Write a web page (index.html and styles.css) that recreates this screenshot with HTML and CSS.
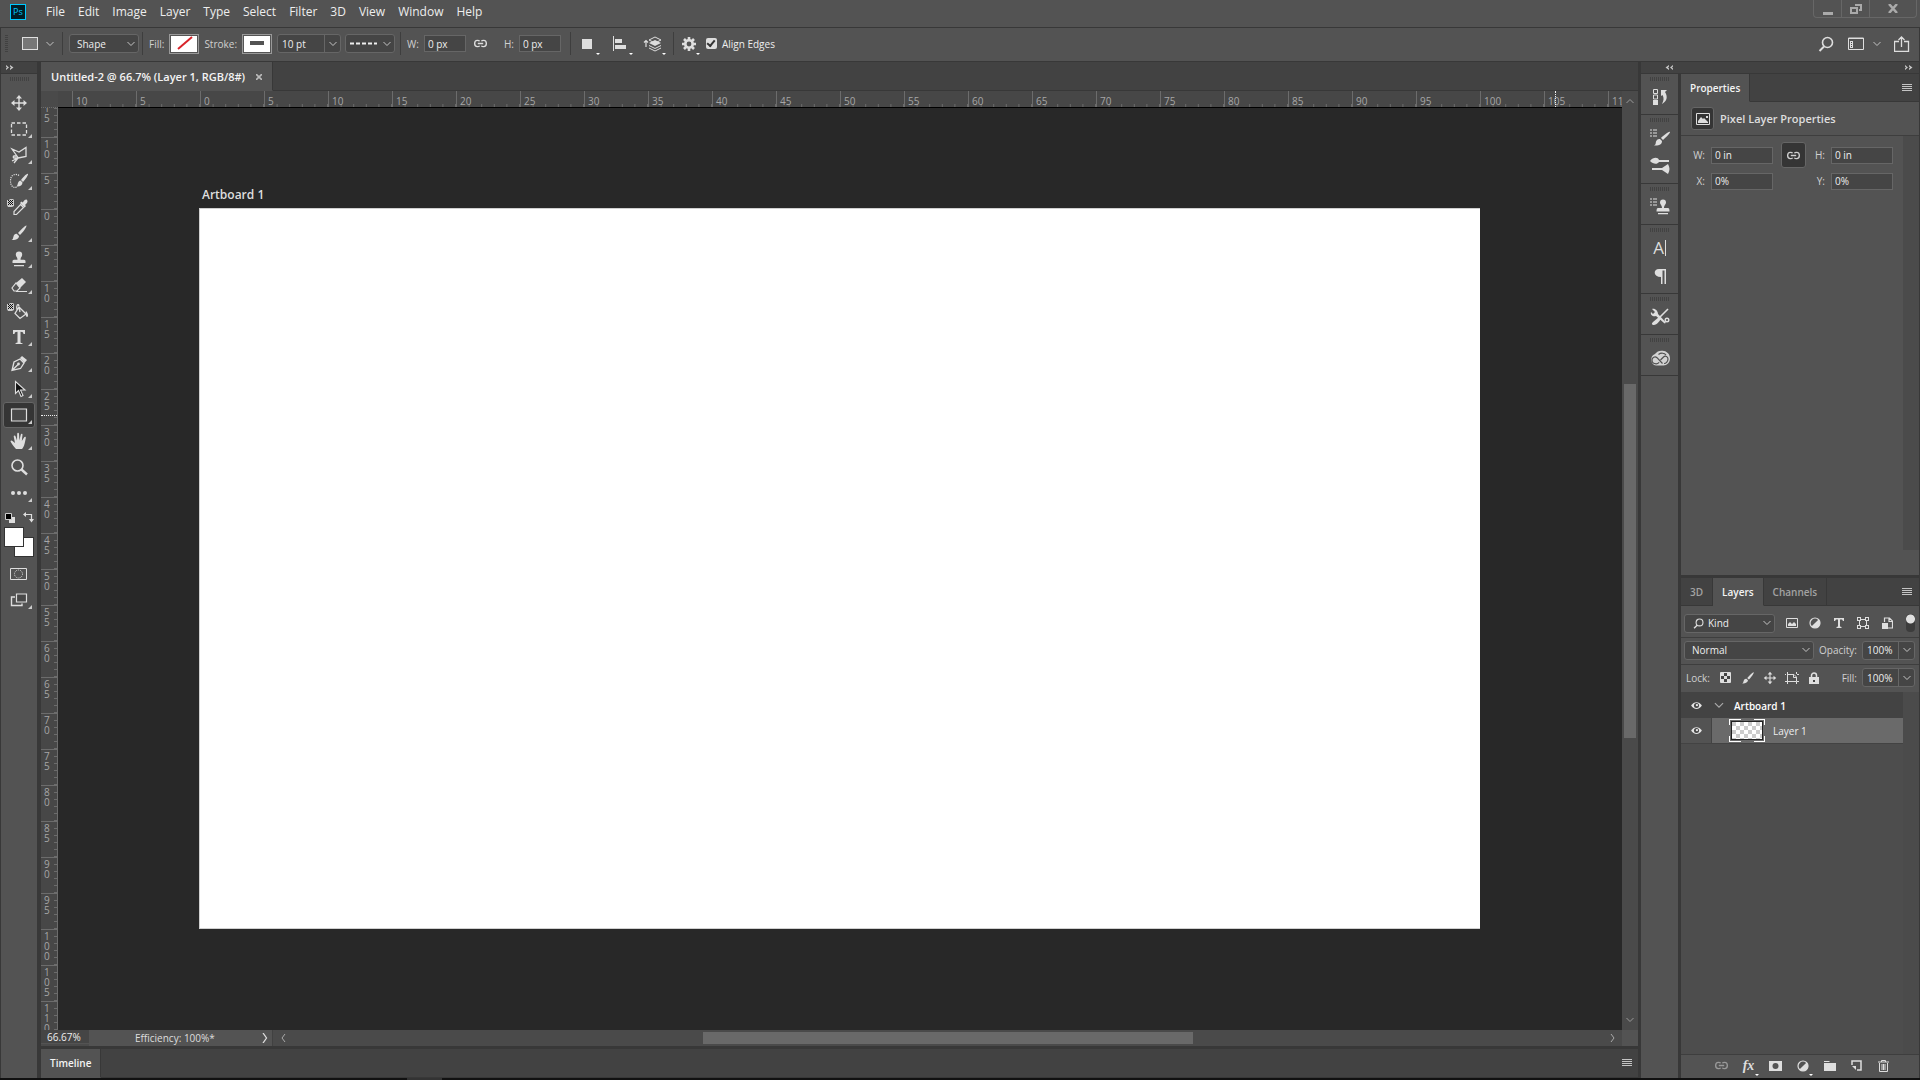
FILE: index.html
```html
<!DOCTYPE html>
<html lang="en">
<head>
<meta charset="utf-8">
<title>Untitled-2 - Photoshop</title>
<link rel="stylesheet" href="styles.css">
</head>
<body>
<svg class="defs" aria-hidden="true">
  <symbol id="chev" viewBox="0 0 8 6"><path d="M.5 1L4 4.500 7.500 1" fill="none" stroke="currentColor"/></symbol>
  <symbol id="dbl" viewBox="0 0 8 5"><path d="M0 0l3 2.500L0 5V3.500l1-1-1-1zM4 0l3.500 2.500L4 5V3.500l1-1-1-1z" fill="currentColor"/></symbol>
  <symbol id="link" viewBox="0 0 16 10"><path d="M7 2.500C6.500 1.500 5.500 1.500 4.500 1.500 2.500 1.500 1.500 3 1.500 5s1 3.500 3 3.500c1 0 2 0 2.500-1M9 2.500c.5-1 1.500-1 2.500-1 2 0 3 1.500 3 3.500s-1 3.500-3 3.500c-1 0-2 0-2.500-1M5 5h6" fill="none" stroke="currentColor" stroke-width="1.500"/></symbol>
  <symbol id="menu" viewBox="0 0 10 8"><path d="M0 .5h10M0 2.500h10M0 4.500h10M0 6.500h10" stroke="currentColor"/></symbol>
  <symbol id="brush" viewBox="0 0 18 18"><path d="M16.500 1.500c.5 1-4 7.500-6.500 9.500L8 9C10.500 6 15.500 1 16.500 1.500zM7 10l2 2c0 3-4 4.500-7.500 4 1.500-.5 1.500-2 2-3.500.5-2 2-3 3.500-2.500z" fill="currentColor"/></symbol>
  <symbol id="stamp" viewBox="0 0 18 18"><path d="M9 1.500a3.200 3.200 0 0 1 3.200 3.200c0 1.800-1.700 2.300-1.700 5h3.500c1 0 1.500.8 1.500 1.500V13h-13v-1.800c0-.7.5-1.500 1.500-1.500h3.500c0-2.700-1.700-3.200-1.700-5A3.200 3.200 0 0 1 9 1.500zM4 15h10v1.200H4z" fill="currentColor"/></symbol>
  <symbol id="move" viewBox="0 0 18 18"><path d="M9 1l3 3.500h-2.300v3.800h3.800V6L17 9l-3.500 3V9.700H9.700v3.800H12L9 17l-3-3.500h2.300V9.700H4.500V12L1 9l3.500-3v2.300h3.800V4.500H6z" fill="currentColor"/></symbol>
  <symbol id="half" viewBox="0 0 12 12"><circle cx="6" cy="6" r="5" fill="none" stroke="currentColor" stroke-width="1.200"/><path d="M9.600 2.400A5 5 0 0 1 2.400 9.600z" fill="currentColor"/></symbol>
  <symbol id="eye" viewBox="0 0 14 10"><path d="M1 5c3-5 9-5 12 0-3 5-9 5-12 0z" fill="currentColor"/><circle cx="7" cy="5" r="2.800" fill="#444"/><circle cx="7.500" cy="4.500" r="1.300" fill="currentColor"/></symbol>
  <symbol id="magnify" viewBox="0 0 16 16"><circle cx="9.500" cy="6.500" r="5" fill="none" stroke="currentColor" stroke-width="1.600"/><path d="M6 10.500L1.500 15" stroke="currentColor" stroke-width="2"/></symbol>
  <symbol id="checker" viewBox="0 0 8 8"><path d="M0 1h2l1-1h3l1 1v6l-2 1H1L0 6z" fill="#ccc"/><path d="M1 1h1v1H1zM3 1h1v1H3zM5 1h1v1H5zM2 2h1v1H2zM4 2h1v1H4zM1 3h1v1H1zM3 3h1v1H3zM5 3h1v1H5zM2 4h1v1H2zM4 4h1v1H4zM1 5h1v1H1zM3 5h1v1H3zM5 5h1v1H5z" fill="#111"/></symbol>
  <symbol id="list" viewBox="0 0 8 8"><path d="M0 1h2M3 1h4M0 4h2M3 4h4M0 7h2M3 7h4" stroke="currentColor" stroke-width="1.200"/></symbol>
</svg>
<div class="app">
  <header class="menubar">
    <svg class="logo" viewBox="0 0 16 16"><rect x=".5" y=".5" width="15" height="15" fill="#001d26" stroke="#00c8ff"/><text x="3" y="11" class="logo-text">Ps</text></svg>
    <nav class="menus">
      <a href="#">File</a><a href="#">Edit</a><a href="#">Image</a><a href="#">Layer</a><a href="#">Type</a><a href="#">Select</a><a href="#">Filter</a><a href="#">3D</a><a href="#">View</a><a href="#">Window</a><a href="#">Help</a>
    </nav>
    <div class="winbtns">
      <button class="wb" aria-label="Minimize"><svg width="10" height="12"><path d="M0 9h10v3H0z" fill="#aaa"/></svg></button>
      <button class="wb" aria-label="Restore"><svg width="12" height="10"><path d="M5 1h6v5H9M1 4h6v5H1z" fill="none" stroke="#aaa" stroke-width="2"/></svg></button>
      <button class="wb wide" aria-label="Close"><svg width="10" height="9"><path d="M1 0l8 9M9 0L1 9" stroke="#aaa" stroke-width="2.500"/></svg></button>
    </div>
  </header>

  <div class="options">
    <span class="vgrip"></span>
    <button class="tool-preset" aria-label="Rectangle tool presets"><svg width="16" height="13"><rect x=".5" y=".5" width="15" height="12" fill="#777" stroke="#e0e0e0"/></svg><svg class="chev"><use href="#chev"/></svg></button>
    <span class="sep"></span>
    <div class="select w70"><select aria-label="Tool mode"><option>Shape</option></select><svg class="chev"><use href="#chev"/></svg></div>
    <span class="sep near"></span>
    <span class="lab">Fill:</span>
    <button class="swatch" aria-label="Fill"><svg width="26" height="15"><path d="M7 13L21 1" stroke="#d8232a" stroke-width="2"/></svg></button>
    <span class="lab">Stroke:</span>
    <button class="swatch" aria-label="Stroke"><svg width="26" height="15"><path d="M6 5h14v4H6z" fill="#535353"/></svg></button>
    <div class="combo w64"><input value="10 pt" aria-label="Stroke width"><button aria-label="Stroke width presets"><svg class="chev"><use href="#chev"/></svg></button></div>
    <button class="dashes" aria-label="Stroke style"><svg width="27" height="3"><path d="M0 1.500h27" stroke="#eee" stroke-width="2" stroke-dasharray="4 2"/></svg><svg class="chev"><use href="#chev"/></svg></button>
    <span class="sep"></span>
    <label class="lab" for="ow">W:</label><input class="field w42" id="ow" value="0 px">
    <button class="ib w30" aria-label="Link sizes"><svg width="15" height="9"><use href="#link"/></svg></button>
    <label class="lab" for="oh">H:</label><input class="field w42" id="oh" value="0 px">
    <span class="sep tight"></span>
    <button class="ib w34 drop" aria-label="Path operations"><svg width="10" height="10"><path d="M0 0h10v10H0z" fill="currentColor"/></svg></button>
    <button class="ib w34 drop" aria-label="Path alignment"><svg width="14" height="15"><path d="M.5 0v15" stroke="currentColor"/><path d="M2 3h7v4H2zM2 9h11v4H2z" fill="currentColor"/></svg></button>
    <button class="ib w34 drop" aria-label="Path arrangement"><svg width="20" height="16" viewBox="0 0 20 16"><path d="M3 11V5M1 6.500L3 4.500l2 2" fill="none" stroke="currentColor" stroke-width="1.200"/><path d="M6 4l6-3 6 3-6 3z" fill="none" stroke="currentColor"/><path d="M6 7l6 3 6-3-2-1-4 2-4-2zM8 6l4-2 4 2-4 2z" fill="currentColor"/><path d="M6 9.500l6 3 6-3M6 12l6 3 6-3" fill="none" stroke="currentColor"/></svg></button>
    <span class="sep near tight"></span>
    <button class="ib w30 drop" aria-label="Path options"><svg width="14" height="14" viewBox="0 0 14 14"><circle cx="7" cy="7" r="3.700" fill="none" stroke="currentColor" stroke-width="2.600"/><path d="M7 0v3M7 11v3M0 7h3M11 7h3M2 2l2 2M10 10l2 2M2 12l2-2M10 4l2-2" stroke="currentColor" stroke-width="2.600"/></svg></button>
    <label class="check"><input type="checkbox" checked>Align Edges</label>
    <span class="grow"></span>
    <button class="ib w30" aria-label="Search"><svg width="16" height="16"><use href="#magnify"/></svg></button>
    <button class="ib workspace" aria-label="Workspace"><svg width="16" height="13"><path d="M.5 1h15v11.500H.5zM0 1.500h16" fill="none" stroke="currentColor"/><path d="M2 4h3v7H2z" fill="currentColor"/><path d="M3 5h1v1H3zM3 7h1v1H3zM3 9h1v1H3z" fill="#444"/></svg><svg class="chev"><use href="#chev"/></svg></button>
    <button class="ib w30" aria-label="Share"><svg width="16" height="16"><path d="M5 5.500H.5v10h14v-10H10M7.500 11V1M4.500 4l3-3 3 3" fill="none" stroke="currentColor" stroke-width="1.300"/></svg></button>
  </div>

  <main class="workspace-grid">
    <aside class="toolbar">
      <div class="dockhead left"><svg width="8" height="5"><use href="#dbl"/></svg></div>
      <span class="grip"></span>
      <div class="tools">
        <button class="tool" aria-label="Move"><svg><use href="#move"/></svg></button>
        <button class="tool more" aria-label="Marquee"><svg viewBox="0 0 18 18"><path d="M1.500 3h15v12h-15z" fill="none" stroke="currentColor" stroke-width="1.300" stroke-dasharray="3.500 2"/></svg></button>
        <button class="tool more" aria-label="Lasso"><svg viewBox="0 0 18 18"><path d="M8 11.500L2 3l7 3 7-4.500v9l-8 1.500M7 10l-3 0c-1 0-1 2 0 2l4 0M8 12l-4 5M8 12l-6 3" fill="none" stroke="currentColor" stroke-width="1.300"/></svg></button>
        <button class="tool more" aria-label="Quick selection"><svg viewBox="0 0 18 18"><path d="M9 3.500C7 2 4 2 2 4s-2 8 0 10 3 1.500 5 1" fill="none" stroke="currentColor" stroke-width="1.200" stroke-dasharray="1.200 1"/><path d="M18 2c.5 1-3 6-5 8l-2-2c2-2.500 6-7 7-6zM10.500 8.500l2 2c0 3-3 4.500-6 4 1-1 1-2 1.500-3.500.5-1.500 1.500-2.500 2.500-2.500z" fill="currentColor"/></svg></button>
        <button class="tool" aria-label="Eyedropper"><svg viewBox="0 0 18 18"><path d="M17 2c1 1 .5 3-1 4l-1 1 1 1-1.500 1.500L10 5l1.500-1.500 1 1 1-1c1-1.500 2.500-2.500 3.500-1.500z" fill="currentColor"/><path d="M10.500 6.500l3 3-7 7H4v-3z" fill="none" stroke="currentColor" stroke-width="1.200"/></svg><svg class="badge"><use href="#checker"/></svg></button>
        <button class="tool more" aria-label="Brush"><svg><use href="#brush"/></svg></button>
        <button class="tool more" aria-label="Clone stamp"><svg><use href="#stamp"/></svg></button>
        <button class="tool more" aria-label="Eraser"><svg viewBox="0 0 18 18"><path d="M6 7l6-5 4 4-6 6z" fill="currentColor"/><path d="M6 7l4 5-3 3H4l-2-3zM6 15.500h11" fill="none" stroke="currentColor" stroke-width="1.200"/></svg></button>
        <button class="tool" aria-label="Paint bucket"><svg viewBox="0 0 18 18"><path d="M9 5l7 7-6 4.500-5-5zM9 5l1 5M9 4c-1-3-3-1-2 4" fill="none" stroke="currentColor" stroke-width="1.300"/><path d="M16 9c3 3 2 6 1 6s-2-3-1-6z" fill="currentColor"/></svg><svg class="badge"><use href="#checker"/></svg></button>
        <button class="tool more" aria-label="Type"><svg viewBox="0 0 18 18"><path d="M3 2h12v4h-1.500c-.3-1.500-.5-2.300-3-2.300V14c0 1 .5 1 2 1.200V16h-7v-.8c1.500-.2 2-.2 2-1.200V3.700C5 3.700 4.800 4.500 4.500 6H3z" fill="currentColor"/></svg></button>
        <button class="tool more" aria-label="Pen"><svg viewBox="0 0 18 18"><path d="M2 16.500l2-8.500 6-3 4 4-3.500 5.500zM2 16.500l6-6" fill="none" stroke="currentColor" stroke-width="1.300"/><circle cx="8.500" cy="10" r="1.400" fill="currentColor"/><path d="M10 4l2-2 5 4-2.500 3z" fill="currentColor"/></svg></button>
        <button class="tool more" aria-label="Path selection"><svg viewBox="0 0 18 18"><path d="M5.500 1.500v12l3-3 2.500 6 2-1-2.500-5.500H15z" fill="#111" stroke="#ddd" stroke-width="1.100"/></svg></button>
        <button class="tool more active" aria-label="Rectangle"><svg viewBox="0 0 18 18"><path d="M1.500 3h15v12h-15z" fill="#484848" stroke="currentColor" stroke-width="1.200"/></svg></button>
        <button class="tool more" aria-label="Hand"><svg viewBox="0 0 18 18"><path d="M6 17c-2-2-4-5-5.500-7.500 0-1.300 1.200-1.300 2.300-.3L5 11 3.700 4.500c0-1.300 1.600-1.300 1.900 0L7 8.500l.2-6.800c0-1.200 1.700-1.200 1.800 0l.4 6.800 1.400-6c.3-1.200 1.800-1 1.700.2L11.800 9l2.400-3.700c.6-1 1.900-.5 1.600.6-.7 3-1 7.100-3 10.100l-.8 1z" fill="currentColor"/></svg></button>
        <button class="tool" aria-label="Zoom"><svg viewBox="0 0 18 18"><circle cx="7.500" cy="7.500" r="5.500" fill="none" stroke="currentColor" stroke-width="1.600"/><path d="M11.500 11.500l5.500 5" stroke="currentColor" stroke-width="2.400"/></svg></button>
        <button class="tool more" aria-label="Edit toolbar"><svg viewBox="0 0 18 18"><circle cx="3" cy="9" r="2" fill="currentColor"/><circle cx="9" cy="9" r="2" fill="currentColor"/><circle cx="15" cy="9" r="2" fill="currentColor"/></svg></button>
      </div>
      <div class="mini">
        <button aria-label="Default colors"><svg width="10" height="10"><path d="M4 4h6v6H4z" fill="#ddd"/><path d="M.5.5h6v6h-6z" fill="#000" stroke="#ccc"/></svg></button>
        <button aria-label="Swap colors"><svg width="11" height="11"><path d="M3 2.500h5.500V7" fill="none" stroke="currentColor" stroke-width="1.200"/><path d="M0 2.500L3 0v5zM6 7h5l-2.500 3.500z" fill="currentColor"/></svg></button>
      </div>
      <div class="colors"><button class="bg" aria-label="Background color"></button><button class="fg" aria-label="Foreground color"></button></div>
      <button class="tool" aria-label="Quick mask"><svg viewBox="0 0 18 18"><path d="M.5 3.500h16v11H.5z" fill="none" stroke="currentColor"/><circle cx="8.500" cy="9" r="4" fill="none" stroke="currentColor" stroke-dasharray="1 1"/></svg></button>
      <button class="tool more" aria-label="Screen mode"><svg viewBox="0 0 18 18"><path d="M6.500 3h10v8h-10z" fill="#484848" stroke="currentColor" stroke-width="1.200"/><path d="M5 6H1.500v8.500H12V12.500" fill="none" stroke="currentColor" stroke-width="1.400"/></svg></button>
    </aside>

    <section class="doc">
      <div class="tabs doctabs"><button class="tab on">Untitled-2 @ 66.7% (Layer 1, RGB/8#)<svg width="6" height="6"><path d="M0 0l6 6M6 0L0 6" stroke="#bbb" stroke-width="1.600"/></svg></button></div>
      <div class="view">
        <div class="corner"></div>
        <div class="hruler">
          <span>10</span><span>5</span><span>0</span><span>5</span><span>10</span><span>15</span><span>20</span><span>25</span><span>30</span><span>35</span><span>40</span><span>45</span><span>50</span><span>55</span><span>60</span><span>65</span><span>70</span><span>75</span><span>80</span><span>85</span><span>90</span><span>95</span><span>100</span><span>105</span><span>110</span>
          <i class="hmark"></i>
        </div>
        <div class="vruler">
          <span>15</span><span>10</span><span>5</span><span>0</span><span>5</span><span>10</span><span>15</span><span>20</span><span>25</span><span>30</span><span>35</span><span>40</span><span>45</span><span>50</span><span>55</span><span>60</span><span>65</span><span>70</span><span>75</span><span>80</span><span>85</span><span>90</span><span>95</span><span>100</span><span>105</span><span>110</span>
          <i class="vmark"></i>
        </div>
        <div class="canvas"><div class="board-wrap"><div class="board-name">Artboard 1</div><div class="board"></div></div></div>
        <div class="vscroll"><svg class="chev up"><use href="#chev"/></svg><div class="vtrack"><div class="vthumb"></div></div><svg class="chev"><use href="#chev"/></svg></div>
      </div>
      <div class="status">
        <input class="zoomlevel" value="66.67%" aria-label="Zoom level">
        <div class="eff"><span>Efficiency: 100%*</span><svg width="6" height="10"><path d="M1 0l3.500 5L1 10" fill="none" stroke="#ddd" stroke-width="1.300"/></svg></div>
        <div class="hscroll"><svg width="5" height="8"><path d="M4 0L1 4l3 4" fill="none" stroke="#aaa"/></svg><div class="htrack"><div class="hthumb"></div></div><svg width="5" height="8"><path d="M1 0l3 4-3 4" fill="none" stroke="#aaa"/></svg></div>
      </div>
      <div class="tabs timeline"><button class="tab on">Timeline</button><button class="pmenu" aria-label="Timeline menu"><svg width="10" height="8"><use href="#menu"/></svg></button></div>
    </section>

    <div class="dock">
      <div class="dockhead both"><svg class="flip" width="8" height="5"><use href="#dbl"/></svg><svg width="8" height="5"><use href="#dbl"/></svg></div>
      <aside class="icons">
        <div class="group"><span class="grip"></span><button aria-label="History"><svg viewBox="0 0 20 18"><path d="M3.500 1.500h4v4h-4zM3.500 7h4v4h-4z" fill="none" stroke="currentColor"/><path d="M3 12h5v5H3z" fill="currentColor"/><path d="M11 2h6l-2 2c3 5 2 9-3 12 2-4 2-6 .5-9L11 8z" fill="currentColor"/></svg></button></div>
        <div class="group"><span class="grip"></span>
          <button aria-label="Brushes"><svg viewBox="0 0 20 18"><use href="#list" width="8" height="8"/><path d="M20 3c.5 1-5 6.500-7 8l-2-2c2-2 8-7 9-6zM10 10l2 2c0 4-4 5-8 4.500 2-1 1.500-2 2-4 .5-1.500 2-3 4-2.500z" fill="currentColor"/></svg></button>
          <button aria-label="Brush settings"><svg viewBox="0 0 20 18"><path d="M0 4c3-4 8-4 9-1h10v2H9C7 8 3 7 0 4zM2 11h10c2-1 4-3 6-4 2 4 2 6 0 10-2-1-4-3-6-4H2z" fill="currentColor"/></svg></button></div>
        <div class="group"><span class="grip"></span><button aria-label="Clone source"><svg viewBox="0 0 20 18"><use href="#list" width="8" height="8"/><path d="M13 1.500a3 3 0 0 1 3 3c0 2-2 2.500-2 5.500h4c1 0 1.500 1 1.500 3.500h-13c0-2.500.5-3.500 1.500-3.500h4c0-3-2-3.500-2-5.500a3 3 0 0 1 3-3zM8 15h10v1.200H8z" fill="currentColor"/></svg></button></div>
        <div class="group"><span class="grip"></span>
          <button aria-label="Character"><span class="glyph">A</span><span class="caret"></span></button>
          <button aria-label="Paragraph"><svg viewBox="0 0 20 18"><path d="M16 2v15h-1.500V3.500h-2V17H11v-7C3 10 3 2 9 2z" fill="currentColor"/></svg></button></div>
        <div class="group"><span class="grip"></span><button aria-label="Tool presets"><svg viewBox="0 0 20 18"><path d="M2 1l3 3-2 2-2-2c-1 3 2 5 5 4l8 7c1 1 2 0 1.500-1L8 6c0-3-3-6-6-5z" fill="currentColor"/><path d="M18 1L9 10" stroke="currentColor" stroke-width="1.600"/><path d="M9 9l2 2c-2 3-5 6-7 6s-3-1-1-3z" fill="currentColor"/><circle cx="17" cy="12" r="1.800" fill="none" stroke="currentColor" stroke-width="1.400"/></svg></button></div>
        <div class="group"><span class="grip"></span><button aria-label="Creative Cloud"><svg class="cc" viewBox="0 0 22 18"><path d="M7 16.500a6 6 0 0 1-1-11.400C8 2 11.500 1 15 2c3.500.7 6 3.500 6 7.500s-3 7-6.500 7z" fill="#d2d2d2"/><path d="M13.500 14.500L8 8.700C6 6.800 3 8.500 3 11s2 3.800 4.200 3.800c1.300 0 2-.5 3-1.500M11.500 11l3-3c2-1.800 4.500-.3 4.500 2s-1.800 4.500-4 4.500M9.500 5.500c2.500-2 6-1.500 7.500.5" fill="none" stroke="#505050" stroke-width="1.200"/></svg></button></div>
      </aside>

      <aside class="panels">
        <section class="props">
          <div class="tabs"><button class="tab on">Properties</button><button class="pmenu" aria-label="Properties menu"><svg width="10" height="8"><use href="#menu"/></svg></button></div>
          <div class="phead"><span class="picon"><svg width="14" height="12"><path d="M.5.5h13v11H.5z" fill="none" stroke="#ddd"/><path d="M2 10V8l3-4 2 2 1-1 4 4v1zM10 3h2v2h-2z" fill="#ddd"/></svg></span><h2>Pixel Layer Properties</h2></div>
          <div class="pbody">
            <div class="pgrid">
              <label for="pw">W:</label><input class="field" id="pw" value="0 in"><button class="plink" aria-label="Link width and height"><svg width="15" height="9"><use href="#link"/></svg></button><label for="ph">H:</label><input class="field" id="ph" value="0 in">
              <label for="px">X:</label><input class="field" id="px" value="0%"><span></span><label for="py">Y:</label><input class="field" id="py" value="0%">
            </div>
            <div class="pstrip"></div>
          </div>
        </section>
        <section class="layers">
          <div class="tabs"><button class="tab">3D</button><button class="tab on">Layers</button><button class="tab">Channels</button><button class="pmenu" aria-label="Layers menu"><svg width="10" height="8"><use href="#menu"/></svg></button></div>
          <div class="lrow filter">
            <div class="select kind"><svg class="lens" width="11" height="11"><use href="#magnify"/></svg><select aria-label="Filter type"><option>Kind</option></select><svg class="chev"><use href="#chev"/></svg></div>
            <div class="filters">
              <button aria-label="Pixel layers"><svg width="12" height="10"><path d="M.5.5h11v9H.5z" fill="none" stroke="currentColor"/><path d="M2 8V6l2-2 2 2 2-2 2 2v2z" fill="currentColor"/></svg></button>
              <button aria-label="Adjustment layers"><svg width="12" height="12"><use href="#half"/></svg></button>
              <button aria-label="Type layers"><svg width="10" height="10"><path d="M0 0h10v3H9L8 1.500H6V8.500L7.500 9v1h-5V9L4 8.500v-7H2L1 3H0z" fill="currentColor"/></svg></button>
              <button aria-label="Shape layers"><svg width="12" height="12"><path d="M2.500 2.500h7v7h-7z" fill="none" stroke="currentColor"/><path d="M0 0h4v4H0zM8 0h4v4H8zM0 8h4v4H0zM8 8h4v4H8z" fill="currentColor"/><path d="M1 1h2v2H1zM9 1h2v2H9zM1 9h2v2H1zM9 9h2v2H9z" fill="#535353"/></svg></button>
              <button aria-label="Smart objects"><svg width="11" height="12"><path d="M2.500 5V1h5l3 3v7H6M7 1v3.500h3" fill="none" stroke="currentColor" stroke-width="1.200"/><path d="M0 6h6v6H0z" fill="currentColor"/></svg></button>
            </div>
            <button class="toggle" aria-label="Toggle filtering"></button>
          </div>
          <div class="lrow">
            <div class="select blend"><select aria-label="Blend mode"><option>Normal</option></select><svg class="chev"><use href="#chev"/></svg></div>
            <label class="lab" for="op">Opacity:</label>
            <div class="combo pct"><input id="op" value="100%"><button aria-label="Opacity slider"><svg class="chev"><use href="#chev"/></svg></button></div>
          </div>
          <div class="lrow last">
            <span class="lab">Lock:</span>
            <div class="locks">
              <button aria-label="Lock transparency"><svg width="11" height="11"><path d="M.5.5h10v10H.5z" fill="#444" stroke="currentColor"/><path d="M1 1h3v3H1zM7 1h3v3H7zM4 4h3v3H4zM1 7h3v3H1zM7 7h3v3H7z" fill="currentColor"/></svg></button>
              <button aria-label="Lock pixels"><svg width="14" height="14"><use href="#brush"/></svg></button>
              <button aria-label="Lock position"><svg width="14" height="14"><use href="#move"/></svg></button>
              <button aria-label="Lock artboard"><svg width="14" height="12"><path d="M2.500 2.500H9L11.500 5v4.500h-9zM8.500 2.500v3h3M2.500 0v12M0 2.500h1M12 9.500h2M11.500 9.500V12M11.500 0v2M12 2.500h2M0 9.500h2" fill="none" stroke="currentColor"/></svg></button>
              <button aria-label="Lock all"><svg width="10" height="12"><path d="M2.500 6V3.500a2.500 2.500 0 0 1 5 0V6" fill="none" stroke="currentColor" stroke-width="1.500"/><path d="M0 5h10v7H0z" fill="currentColor"/><path d="M4 8h2v2H4z" fill="#444"/></svg></button>
            </div>
            <label class="lab push" for="fi">Fill:</label>
            <div class="combo pct"><input id="fi" value="100%"><button aria-label="Fill slider"><svg class="chev"><use href="#chev"/></svg></button></div>
          </div>
          <div class="lbody">
            <div class="llist">
              <div class="layer group-row"><button class="vis" aria-label="Toggle Artboard 1"><svg width="13" height="9"><use href="#eye"/></svg></button><svg class="twist"><use href="#chev"/></svg><b>Artboard 1</b></div>
              <div class="layer sel"><button class="vis" aria-label="Toggle Layer 1"><svg width="13" height="9"><use href="#eye"/></svg></button><span class="thumb"><span class="pix"></span></span><span>Layer 1</span></div>
            </div>
            <div class="lstrip"></div>
          </div>
          <footer class="lfoot">
            <button class="dim" aria-label="Link layers"><svg width="15" height="9"><use href="#link"/></svg></button>
            <button class="drop fx" aria-label="Layer style">fx</button>
            <button aria-label="Add mask"><svg width="13" height="10"><path d="M0 0h13v10H0z" fill="currentColor"/><circle cx="6.500" cy="5" r="3" fill="#535353"/></svg></button>
            <button class="drop" aria-label="Adjustment layer"><svg width="12" height="12"><use href="#half"/></svg></button>
            <button aria-label="New group"><svg width="12" height="10"><path d="M0 0h5l1 1H0zM0 2h12v8H0z" fill="currentColor"/></svg></button>
            <button aria-label="New layer"><svg width="11" height="11"><path d="M1 5V1h9v9H6" fill="none" stroke="currentColor" stroke-width="1.500"/><path d="M1 6h4v4z" fill="currentColor"/></svg></button>
            <button aria-label="Delete layer"><svg width="11" height="12"><path d="M0 2h11M3.500 2V.5h4V2M1.500 3v8.500h8V3M4 4v6M5.500 4v6M7 4v6" fill="none" stroke="currentColor"/></svg></button>
          </footer>
        </section>
      </aside>
    </div>
  </main>
  <div class="edge"><span></span></div>
</div>
</body>
</html>
```
FILE: styles.css
```css
* { box-sizing: border-box; }
body { margin: 0; background: #535353; color: #dedede; font: 10px/14px "Open Sans", "Noto Sans", sans-serif; overflow: hidden; }
button, input, select { font: inherit; color: inherit; margin: 0; padding: 0; border: 0; background: none; border-radius: 0; }
button { display: flex; align-items: center; justify-content: center; }
a { color: inherit; text-decoration: none; }
svg { display: block; flex: none; }
.defs { position: absolute; width: 0; height: 0; }
.chev { width: 8px; height: 6px; color: #c4c4c4; }
.grow { flex: 1; }

.app { display: grid; grid-template-rows: 28px 34px minmax(0, 1fr) 2px; height: 100vh; }

.menubar { display: flex; align-items: flex-start; border-bottom: 1px solid #383838; padding-left: 10px; }
.logo { width: 16px; height: 16px; margin-top: 4px; }
.logo-text { font: 9px "Open Sans", sans-serif; fill: #00c8ff; }
.menus { display: flex; gap: 13px; padding: 3px 0 0 20px; font-size: 12px; line-height: 18px; color: #eee; }
.winbtns { display: flex; margin-left: auto; margin-right: 3px; height: 18px; border: 1px solid #676767; border-top: 0; border-radius: 0 0 4px 4px; }
.wb { width: 28px; border-right: 1px solid #676767; }
.wb.wide { width: 46px; border: 0; }

.options { display: flex; align-items: center; border: 1px solid #383838; border-width: 0 1px 1px; padding: 0 2px 2px 3px; color: #dedede; }
.vgrip { width: 3px; height: 18px; margin-left: 1px; background: repeating-linear-gradient(#414141 0 1px, transparent 1px 2px); }
.tool-preset { gap: 8px; margin: 0 8px 0 14px; }
.sep { width: 1px; height: 23px; background: #3e3e3e; margin-right: 6px; }
.sep.near { margin-left: 3px; }
.sep.tight { margin-right: 0; }
.lab { color: #d0d0d0; white-space: nowrap; }
.select, .combo, .dashes { position: relative; display: flex; align-items: center; height: 19px; background: #454545; border: 1px solid #666; border-radius: 3px; }
.select select { appearance: none; width: 100%; height: 17px; padding-left: 7px; color: #eee; }
.select .chev { position: absolute; right: 3px; pointer-events: none; }
.w70 { width: 70px; }
.w64 { width: 64px; margin-right: 4px; }
.swatch { width: 30px; height: 20px; margin: 0 5px; border: 1px solid #999; box-shadow: inset 0 0 0 1px #555; background: #fff; }
.combo input { flex: 1; min-width: 0; height: 17px; padding-left: 4px; color: #eee; }
.combo button { width: 16px; height: 17px; border-left: 1px solid #666; }
.dashes { width: 50px; gap: 6px; margin-right: 5px; }
.field { height: 17px; background: #454545; border: 1px solid #666; padding-left: 3px; color: #eee; min-width: 0; }
.w42 { width: 42px; margin: 0 0 0 5px; }
#oh { margin-right: 9px; }
.ib { height: 32px; color: #dedede; }
.w30 { width: 30px; }
.w34 { width: 33px; }
.options > [for="oh"] { margin-left: 8px; }
.drop { position: relative; }
.drop::after { content: ""; position: absolute; right: 4px; bottom: 5px; border: 2px solid transparent; border-top-color: #fff; border-bottom: 0; }
.check { display: flex; align-items: center; gap: 5px; margin-left: 2px; color: #eee; }
.check input { appearance: none; width: 11px; height: 11px; border-radius: 2px; background: #ddd; display: grid; place-items: center; }
.check input:checked::before { content: ""; width: 6px; height: 3px; margin-bottom: 2px; border: solid #333; border-width: 0 0 2px 2px; transform: rotate(-50deg); }
.workspace { gap: 9px; margin: 0 6px 0 7px; }

.workspace-grid { display: grid; grid-template-columns: 41px minmax(0, 1fr) 282px; min-height: 0; background: #383838; }
.dockhead { display: flex; align-items: center; justify-content: space-between; height: 12px; background: #424242; border-bottom: 1px solid #383838; color: #c8c8c8; padding: 0 5px; }
.flip { transform: scaleX(-1); }
.grip { width: 19px; height: 4px; background: repeating-linear-gradient(90deg, #424242 0 1px, transparent 1px 2px); }

.toolbar { display: flex; flex-direction: column; align-items: center; background: #535353; border-left: 1px solid #383838; border-right: 4px solid #383838; }
.toolbar .dockhead { align-self: stretch; }
.toolbar .grip { margin: 3px 0 9px; }
.tool { position: relative; width: 32px; height: 26px; color: #dedede; border: 1px solid transparent; border-radius: 3px; }
.tool svg { width: 18px; height: 18px; }
.tool .badge { position: absolute; left: 3px; top: 4px; width: 8px; height: 8px; }
.tool.active { background: #353535; border-color: #666; }
.more::after { content: ""; position: absolute; right: 2px; bottom: 3px; border: 2px solid transparent; border-right-color: #ccc; border-bottom-color: #ccc; }
.mini { display: flex; gap: 7px; margin: 6px 0 4px; }
.mini button { width: 11px; height: 11px; }
.colors { position: relative; width: 30px; height: 30px; margin-bottom: 4px; }
.colors button { position: absolute; width: 20px; height: 20px; background: #fff; border: 1px solid #333; }
.fg { left: 0; top: 0; }
.bg { right: 0; bottom: 0; }

.doc { display: grid; grid-template-rows: 29px minmax(0, 1fr) 19px 29px; min-height: 0; }
.tabs { display: flex; background: #424242; border-bottom: 1px solid #383838; }
.tab { color: #a3a3a3; font-weight: 600; padding: 0 9px; border-right: 1px solid #383838; border-bottom: 1px solid #383838; margin-bottom: -1px; white-space: nowrap; }
.tab.on { background: #535353; color: #f4f4f4; border-bottom-color: #535353; }
.doctabs .tab { gap: 11px; padding: 2px 10px 0; font-size: 11px; }
.pmenu { margin-left: auto; padding: 0 6px; color: #c4c4c4; }
.panels .pmenu { padding-right: 7px; }
.view { display: grid; grid-template: 17px minmax(0, 1fr) / 17px minmax(0, 1fr) 16px; min-height: 0; }
.corner { background: #4a4a4a; border-bottom: 1px dotted #6c6c6c; }
.hruler { position: relative; display: flex; overflow: hidden; background: #474747; border-bottom: 1px solid #000; padding-left: 14px; color: #a6a6a6; }
.hruler span { flex: none; width: 64px; padding-left: 3px; line-height: 20px; border-left: 1px solid #6c6c6c; background: linear-gradient(90deg, transparent 12px, #6c6c6c 12px) 0 100% / 20% 3px repeat-x; }
.hmark { position: absolute; left: calc(100% - 67px); top: 0; height: 16px; border-left: 1px dotted #eee; }
.vruler { position: relative; display: flex; flex-direction: column; overflow: hidden; background: #474747; border-right: 1px solid #6c6c6c; color: #a6a6a6; }
.vruler span { flex: none; height: 36px; width: 16px; padding: 1px 8px 0 3px; line-height: 10px; text-align: center; word-break: break-all; border-top: 1px solid #6c6c6c; background: linear-gradient(transparent 6px, #6c6c6c 6px) 100% 0 / 3px 20% repeat-y; }
.vruler span:first-child { margin-top: -7px; }
.vmark { position: absolute; left: 0; top: 307px; width: 16px; border-top: 1px dotted #eee; }
.canvas { background: #282828; overflow: hidden; padding: 78px 0 0 141px; }
.board-wrap { width: 1281px; }
.board-name { font-size: 12px; line-height: 18px; font-weight: 600; color: #dedede; padding: 0 0 4px 3px; }
.board { height: 721px; background: #fff; border: 1px solid #d0d0d0; border-width: 1px 0 1px 1px; }
.vscroll { grid-column: 3; grid-row: 1 / 3; display: flex; flex-direction: column; align-items: center; background: #4a4a4a; padding: 7px 0 7px; }
.vscroll .chev { color: #999; }
.up { transform: scaleY(-1); }
.vtrack { flex: 1; padding-top: 280px; }
.vthumb { width: 12px; height: 354px; background: #696969; }
.status { display: flex; border-bottom: 3px solid #383838; background: #4a4a4a; }
.zoomlevel { width: 48px; height: 14px; padding-left: 6px; color: #eee; background: #454545; border-bottom: 1px solid #535353; }
.eff { display: flex; align-items: center; justify-content: space-between; width: 184px; padding: 0 4px 0 46px; background: #535353; border-right: 1px solid #414141; }
.hscroll { flex: 1; display: flex; align-items: center; padding: 0 23px 0 8px; background: linear-gradient(90deg, transparent calc(100% - 16px), #535353 0); }
.htrack { flex: 1; padding-left: 417px; }
.hthumb { width: 490px; height: 12px; background: #696969; }

.dock { display: grid; grid-template: 12px minmax(0, 1fr) / 37px 240px; column-gap: 1px; border-left: 3px solid #383838; border-right: 1px solid #383838; min-height: 0; }
.both { grid-column: 1 / 3; padding: 0 6px 0 24px; }
.icons { background: #535353; }
.group { display: flex; flex-direction: column; align-items: center; border-bottom: 1px solid #383838; padding-bottom: 3px; }
.group .grip { margin: 3px 0 2px; }
.group button { width: 37px; height: 28px; color: #dedede; }
.group svg { width: 20px; height: 18px; }
.group .cc { width: 22px; }
.glyph { font-size: 17px; }
.caret { width: 1px; height: 16px; margin-left: 1px; background: #ddd; }

.panels { display: grid; grid-template-rows: 501px minmax(0, 1fr); row-gap: 3px; border-left: 2px solid #383838; min-height: 0; }
.panels .tabs { height: 28px; }
.props { display: flex; flex-direction: column; background: #535353; }
.phead { display: flex; align-items: center; gap: 6px; height: 34px; padding-left: 10px; border-bottom: 1px solid #3e3e3e; }
.phead h2 { margin: 0; font-size: 11px; color: #dedede; font-weight: 600; }
.picon { display: grid; place-items: center; width: 23px; height: 23px; background: #353535; border: 1px solid #666; border-radius: 3px; }
.pbody { display: flex; flex: 1; padding-bottom: 25px; }
.pgrid { flex: 1; display: grid; grid-template-columns: 19px 62px 29px 11px 62px; grid-auto-rows: 26px; column-gap: 6px; align-items: center; align-content: start; padding: 6px 0 0 5px; color: #d0d0d0; }
.pgrid label { text-align: right; }
.plink { width: 25px; height: 26px; margin-left: 2px; background: #353535; border: 1px solid #666; border-radius: 3px; }
.pstrip, .lstrip { width: 16px; background: #4b4b4b; }

.layers { display: grid; grid-template-rows: 28px 32px 27px 27px minmax(0, 1fr) 24px; background: #535353; min-height: 0; }
.lrow { display: flex; align-items: center; gap: 5px; padding: 0 4px 2px 3px; border-bottom: 1px solid #3e3e3e; }
.filter { padding: 3px 4px 0 3px; }
.last { border-bottom: 0; }
.kind { width: 91px; padding-left: 8px; }
.kind .lens { width: 11px; height: 11px; }
.kind select { padding-left: 4px; }
.filters { display: flex; }
.filters button, .locks button { width: 24px; height: 20px; }
.filters button:first-child { width: 23px; }
.toggle { width: 9px; height: 18px; margin-left: auto; background: radial-gradient(circle at 50% 5px, #e0e0e0 4px, #3c3c3c 5px); border-radius: 4px; }
.blend { flex: 1; }
.pct { width: 53px; }
.locks { display: flex; }
.locks button { width: 22px; }
.push { margin-left: auto; }
.last .lab:first-child { padding-left: 2px; }
.lbody { display: flex; background: #4d4d4d; min-height: 0; }
.llist { flex: 1; border-top: 1px solid #434343; }
.layer { display: flex; align-items: center; height: 25px; color: #eee; }
.layer b { font-weight: 600; color: #fff; }
.group-row { background: #434343; }
.sel { height: 26px; background: linear-gradient(90deg, #535353 30px, #434343 30px 31px, #6a6a6a 31px); border-bottom: 1px solid #434343; }
.vis { width: 31px; height: 24px; color: #e4e4e4; }
.twist { width: 10px; height: 7px; margin: 0 10px 0 2px; color: #aaa; }
.thumb { display: grid; place-items: center; width: 36px; height: 23px; margin: 0 8px 0 17px; background: linear-gradient(#fff, #fff) 0 0 / 12px 1px, linear-gradient(#fff, #fff) 0 0 / 1px 6px, linear-gradient(#fff, #fff) 100% 0 / 11px 1px, linear-gradient(#fff, #fff) 100% 0 / 1px 6px, linear-gradient(#fff, #fff) 0 100% / 12px 1px, linear-gradient(#fff, #fff) 0 100% / 1px 6px, linear-gradient(#fff, #fff) 100% 100% / 11px 1px, linear-gradient(#fff, #fff) 100% 100% / 1px 6px; background-repeat: no-repeat; }
.pix { width: 32px; height: 19px; border: 1px solid #222; background: conic-gradient(#fff 25%, #ccc 0 50%, #fff 0 75%, #ccc 0) 0 0 / 8px 8px; }
.lfoot { display: flex; align-items: center; justify-content: flex-end; padding: 0 22px 2px 0; border-top: 1px solid #3e3e3e; color: #dedede; }
.lfoot button { width: 27px; height: 21px; }
.lfoot .drop::after { bottom: 0; right: 3px; }
.lfoot .dim { color: #999; }
.fx { font: italic 600 14px/18px "Liberation Serif", serif; }
.edge { background: #111; padding-left: 407px; }
.edge span { display: block; width: 35px; height: 2px; background: #333; }
```
